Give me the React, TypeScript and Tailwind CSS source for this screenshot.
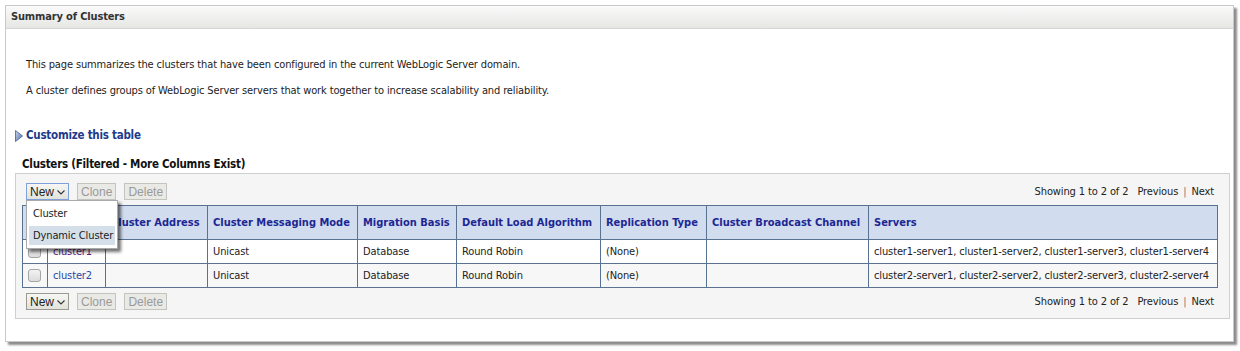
import React from "react";

const cols = [
  { w: 25, label: "" },
  { w: 58, label: "Name" },
  { w: 102, label: "Cluster Address" },
  { w: 150, label: "Cluster Messaging Mode" },
  { w: 99, label: "Migration Basis" },
  { w: 144, label: "Default Load Algorithm" },
  { w: 106, label: "Replication Type" },
  { w: 162, label: "Cluster Broadcast Channel" },
  { w: 349, label: "Servers" },
];

const rows = [
  {
    name: "cluster1",
    visited: true,
    servers: "cluster1-server1, cluster1-server2, cluster1-server3, cluster1-server4",
  },
  {
    name: "cluster2",
    visited: false,
    servers: "cluster2-server1, cluster2-server2, cluster2-server3, cluster2-server4",
  },
];

function Buttons({ menu }: { menu?: boolean }) {
  return (
    <div className="flex items-center gap-[8px] font-['Liberation_Sans',Arial,sans-serif] text-[12px] leading-none">
      <div className="relative">
        <div
          className={
            "h-[17px] px-[3px] flex items-center gap-[3px] border bg-gradient-to-b from-[#f6f6f4] to-[#e2e2dc] text-[#222] " +
            (menu ? "border-[#7fa0d8]" : "border-[#9a9a92]")
          }
        >
          <span>New</span>
          <svg width="8" height="5" viewBox="0 0 8 5" className="mt-[1px]">
            <path d="M0.5 0.5 L4 4 L7.5 0.5" fill="none" stroke="#333" strokeWidth="1.1" />
          </svg>
        </div>
        {menu && (
          <div className="absolute left-0 top-[17px] z-10 w-[92px] bg-white border border-[#a9a9a9] shadow-[3px_3px_3px_rgba(0,0,0,0.55)] py-[3px] px-[2px] font-['DejaVu_Sans_Condensed','DejaVu_Sans',sans-serif] text-[11px] tracking-[-0.12px] text-[#222]">
            <div className="h-[19px] flex items-center px-[4px]">Cluster</div>
            <div className="h-[19px] mt-[3px] flex items-center px-[4px] bg-[#d5dfe9] whitespace-nowrap">
              Dynamic Cluster
            </div>
          </div>
        )}
      </div>
      <div className="h-[17px] px-[3px] flex items-center border border-[#c4c4bf] bg-[#e9e9e6] text-[#9a9a9a]">
        Clone
      </div>
      <div className="h-[17px] px-[3px] flex items-center border border-[#c4c4bf] bg-[#e9e9e6] text-[#9a9a9a]">
        Delete
      </div>
    </div>
  );
}

function Pager() {
  return (
    <div className="flex items-center text-[11px] tracking-[-0.12px] text-[#222] whitespace-nowrap">
      <span>Showing 1 to 2 of 2</span>
      <span className="ml-[9px]">Previous</span>
      <span className="mx-[5px] text-[#777]">|</span>
      <span>Next</span>
    </div>
  );
}

export default function App() {
  return (
    <div className="w-[1240px] h-[351px] bg-white pt-[5px] pl-[5px] font-['DejaVu_Sans_Condensed','DejaVu_Sans',sans-serif] text-[#222]">
      <div className="w-[1229px] h-[337px] border border-[#c9c9c9] bg-white shadow-[3px_3px_2px_rgba(0,0,0,0.45)] flex flex-col">
        <div className="h-[23px] flex items-center px-[5px] bg-gradient-to-b from-[#fafafa] to-[#e6e6e4] border-b border-[#d6d6d6]">
          <span className="text-[11px] font-bold tracking-[-0.15px] text-[#333]">Summary of Clusters</span>
        </div>
        <div className="flex flex-col">
          <p className="ml-[20px] mt-[29px] text-[11px] leading-[13px] tracking-[-0.13px]">
            This page summarizes the clusters that have been configured in the current WebLogic Server domain.
          </p>
          <p className="ml-[20px] mt-[13px] text-[11px] leading-[13px] tracking-[-0.13px]">
            A cluster defines groups of WebLogic Server servers that work together to increase scalability and reliability.
          </p>
          <div className="ml-[9px] mt-[30px] flex items-center gap-[3px]">
            <svg width="8" height="12" viewBox="0 0 8 12">
              <defs>
                <linearGradient id="tri" x1="0" y1="0" x2="1" y2="1">
                  <stop offset="0" stopColor="#c9d6ea" />
                  <stop offset="1" stopColor="#4e6fa6" />
                </linearGradient>
              </defs>
              <path d="M0.5 0.5 L7.5 6 L0.5 11.5 Z" fill="url(#tri)" stroke="#3f5d93" strokeWidth="0.8" />
            </svg>
            <span className="text-[11.5px] font-bold tracking-[-0.25px] text-[#1f3b8c]">Customize this table</span>
          </div>
          <div className="ml-[16px] mt-[13px] text-[11.5px] font-bold tracking-[-0.25px] text-[#111] leading-[14px]">
            Clusters (Filtered - More Columns Exist)
          </div>
          <div className="ml-[9px] mt-[2px] w-[1215px] h-[146px] border border-[#cfcfcf] bg-[#f5f5f5] px-[6px] pt-[9px]">
            <div className="flex items-center justify-between pl-[4px] pr-[9px]">
              <Buttons menu />
              <Pager />
            </div>
            <table className="mt-[5px] border-collapse table-fixed w-[1195px] text-[11px]">
              <colgroup>
                {cols.map((c, i) => (
                  <col key={i} style={{ width: c.w }} />
                ))}
              </colgroup>
              <thead>
                <tr className="h-[34px] bg-[#d1dcee]">
                  {cols.map((c, i) => (
                    <th
                      key={i}
                      className="border border-[#5a7291] text-left px-[5px] font-bold text-[#1d2794] whitespace-nowrap"
                    >
                      {c.label}
                    </th>
                  ))}
                </tr>
              </thead>
              <tbody className="tracking-[-0.12px]">
                {rows.map((r, ri) => (
                  <tr key={ri} className={"h-[24px] " + (ri === 0 ? "bg-white" : "bg-[#f7f7f7]")}>
                    <td className="border border-[#5a7291] px-[5px]">
                      <div className="w-[13px] h-[13px] rounded-[3px] border border-[#a5a5a5] bg-gradient-to-b from-[#f2f2f2] to-[#dcdcdc]" />
                    </td>
                    <td className={"border border-[#5a7291] px-[5px] " + (r.visited ? "text-[#5a1c7a]" : "text-[#2a48a4]")}>
                      {r.name}
                    </td>
                    <td className="border border-[#5a7291] px-[5px]"></td>
                    <td className="border border-[#5a7291] px-[5px]">Unicast</td>
                    <td className="border border-[#5a7291] px-[5px]">Database</td>
                    <td className="border border-[#5a7291] px-[5px]">Round Robin</td>
                    <td className="border border-[#5a7291] px-[5px]">(None)</td>
                    <td className="border border-[#5a7291] px-[5px]"></td>
                    <td className="border border-[#5a7291] px-[5px] whitespace-nowrap">{r.servers}</td>
                  </tr>
                ))}
              </tbody>
            </table>
            <div className="mt-[5px] flex items-center justify-between pl-[4px] pr-[9px]">
              <Buttons />
              <Pager />
            </div>
          </div>
        </div>
      </div>
    </div>
  );
}
